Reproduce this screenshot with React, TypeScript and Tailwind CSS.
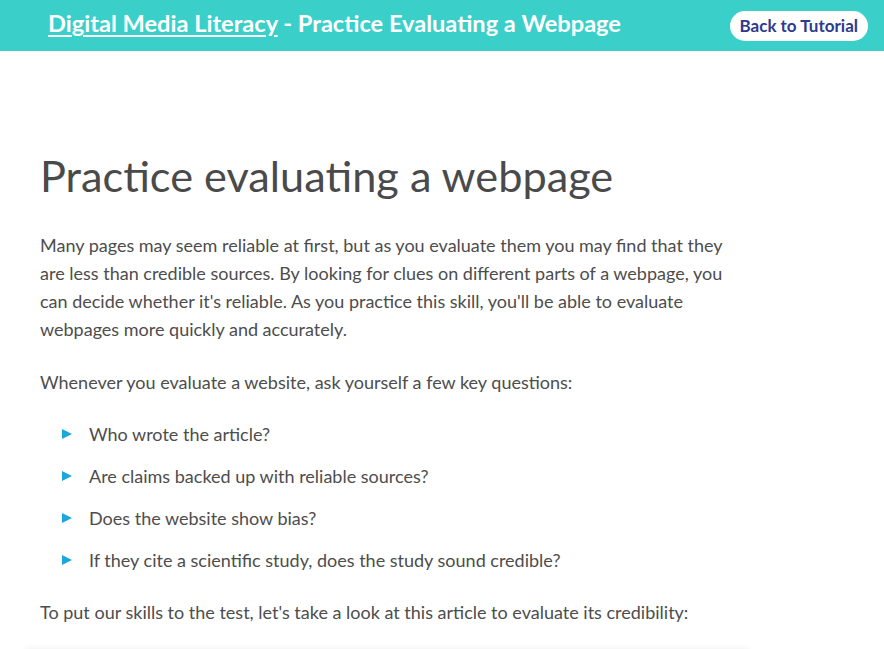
import React from "react";

const bullets = [
  "Who wrote the article?",
  "Are claims backed up with reliable sources?",
  "Does the website show bias?",
  "If they cite a scientific study, does the study sound credible?",
];

export default function App() {
  return (
    <div className="w-[884px] h-[649px] overflow-hidden bg-white" style={{ fontFamily: "Lato, 'Open Sans', sans-serif" }}>
      <header className="h-[51px] bg-[#3bcfca] flex items-center justify-between pl-[48px] pr-[16px]">
        <h1 className="text-white font-bold text-[23.6px] leading-none -mt-[3px]">
          <span className="underline underline-offset-[3px]">Digital Media Literacy</span>
          <span> - Practice Evaluating a Webpage</span>
        </h1>
        <button className="bg-white rounded-full h-[30px] px-[10px] text-[#2e3a8c] font-bold text-[17px] leading-none">Back to Tutorial</button>
      </header>
      <main className="w-[725px] ml-[25px] px-[15px] pt-[96px] text-[#4d4d4d]">
        <h2 className="text-[43.3px] leading-[56px] font-normal text-[#4a4a4a]">Practice evaluating a webpage</h2>
        <p className="mt-[28px] text-[18px] leading-[28px]">
          Many pages may seem reliable at first, but as you evaluate them you may find that they are less than credible sources. By looking for clues on different parts of a webpage, you can decide whether it's reliable. As you practice this skill, you'll be able to evaluate webpages more quickly and accurately.
        </p>
        <p className="mt-[25px] text-[18px] leading-[28px]">Whenever you evaluate a website, ask yourself a few key questions:</p>
        <ul className="mt-[24px] flex flex-col gap-[14px]">
          {bullets.map((b) => (
            <li key={b} className="flex items-center text-[18px] leading-[28px]">
              <span className="w-[49px] pl-[22px] flex items-center">
                <svg width="10" height="10" viewBox="0 0 10 10"><polygon points="0,0 10,5 0,10" fill="#1aa7dc" /></svg>
              </span>
              {b}
            </li>
          ))}
        </ul>
        <p className="mt-[24px] text-[18px] leading-[28px]">To put our skills to the test, let's take a look at this article to evaluate its credibility:</p>
      </main>
      <div className="w-[725px] ml-[25px] mt-[24px] h-[40px] bg-[#f6f7f7] shadow-[0_-2px_6px_rgba(0,0,0,0.06)] rounded-t-[4px]"></div>
    </div>
  );
}
